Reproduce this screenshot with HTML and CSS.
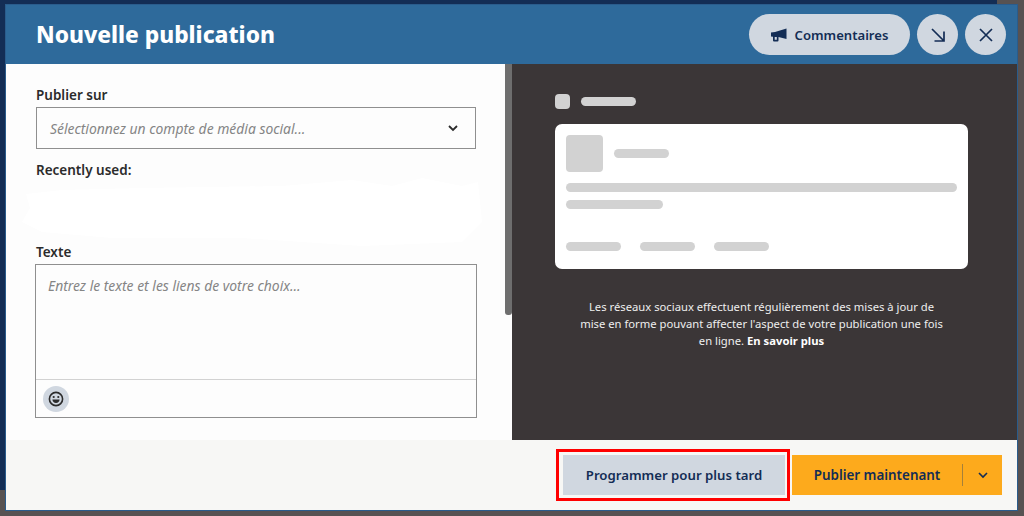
FILE: index.html
```html
<!DOCTYPE html>
<html lang="fr">
<head>
  <meta charset="utf-8">
  <title>Nouvelle publication</title>
  <link rel="stylesheet" href="styles.css">
</head>
<body>
  <div class="modal">
    <header class="modal-head">
      <h1>Nouvelle publication</h1>
      <div class="head-actions">
        <button class="pill">
          <svg class="pill-icon" viewBox="0 0 16 14" width="16" height="14"><path d="M0 4.5 L4 4 L15.5 0.5 V11 L7.5 9 V12.5 Q7.5 13.5 6.5 13.5 H3 Q2 13.5 2 12.5 V8.7 L0 8.4 Z M3.7 9 V11.8 H5.8 V9 Z" fill="#132d55" fill-rule="evenodd"/></svg>
          Commentaires
        </button>
        <button class="round">
          <svg viewBox="0 0 16 16" width="16" height="16"><path d="M2 2 L13.5 13.5 M14 4.5 V14 H4.5" fill="none" stroke="#132d55" stroke-width="1.7"/></svg>
        </button>
        <button class="round">
          <svg viewBox="0 0 16 16" width="16" height="16"><path d="M2 2 L14 14 M14 2 L2 14" fill="none" stroke="#132d55" stroke-width="1.7"/></svg>
        </button>
      </div>
    </header>

    <div class="modal-body">
      <section class="form-pane">
        <label class="field-label">Publier sur</label>
        <div class="select">
          <span>Sélectionnez un compte de média social...</span>
          <svg viewBox="0 0 10 7" width="10" height="7"><path d="M1 1 L5 5 L9 1" fill="none" stroke="#2b2b2b" stroke-width="1.8"/></svg>
        </div>
        <label class="field-label recent-label">Recently used:</label>
        <div class="recent-list">
          <!-- account names painted out in the screenshot -->
          <svg class="recent-blot" viewBox="0 0 460 74" width="460" height="74"><path d="M4 22 L40 18 L120 16 L260 14 L330 8 L370 14 L400 6 L440 14 L456 10 L460 50 L440 70 L340 74 L220 66 L90 66 L20 60 L0 50 L8 36 Z" fill="#fff"/></svg>
        </div>
        <label class="field-label">Texte</label>
        <div class="editor">
          <div class="editor-text">Entrez le texte et les liens de votre choix...</div>
          <div class="editor-tools">
            <span class="emoji">
              <svg viewBox="0 0 16 16" width="16" height="16">
                <circle cx="8" cy="8" r="6.6" fill="none" stroke="#2b2b2b" stroke-width="1.6"/>
                <circle cx="5.7" cy="6" r="1.1" fill="#2b2b2b"/>
                <circle cx="10.3" cy="6" r="1.1" fill="#2b2b2b"/>
                <path d="M4.4 8.6 H11.6 Q11.2 12 8 12 Q4.8 12 4.4 8.6 Z" fill="#2b2b2b"/>
              </svg>
            </span>
          </div>
        </div>
        <div class="scroll-thumb"></div>
      </section>

      <section class="preview-pane">
        <div class="preview-account">
          <span class="ph-square"></span>
          <span class="ph-line w55"></span>
        </div>
        <div class="preview-card">
          <div class="card-top">
            <span class="ph-avatar"></span>
            <span class="ph-line w55"></span>
          </div>
          <div class="ph-line full"></div>
          <div class="ph-line w97"></div>
          <div class="card-actions">
            <span class="ph-line w55"></span>
            <span class="ph-line w55"></span>
            <span class="ph-line w55"></span>
          </div>
        </div>
        <p class="preview-note">Les réseaux sociaux effectuent régulièrement des mises à jour de<br>mise en forme pouvant affecter l'aspect de votre publication une fois<br>en ligne. <b>En savoir plus</b></p>
      </section>
    </div>

    <footer class="modal-foot">
      <div class="highlight">
        <button class="btn-later">Programmer pour plus tard</button>
      </div>
      <button class="btn-publish">
        <span class="publish-text">Publier maintenant</span>
        <span class="publish-caret">
          <svg viewBox="0 0 10 7" width="10" height="7"><path d="M1 1 L5 5 L9 1" fill="none" stroke="#132d55" stroke-width="1.6"/></svg>
        </span>
      </button>
    </footer>
  </div>
</body>
</html>
```

FILE: styles.css
```css
html, body {margin: 0; height: 100%;}
body {height: 516px; overflow: hidden; font-family: "Noto Sans", "Liberation Sans", sans-serif; color: #2b2b2b; background-color: #575252;
  background-image: linear-gradient(#132d55, #132d55), linear-gradient(#132d55, #132d55);
  background-size: 997px 5px, 6px 490px; background-position: 0 0, 0 0; background-repeat: no-repeat;}
button {font-family: inherit; border: none; cursor: pointer;}

.modal {width: 1011px; height: 505px; margin: 5px 0 0 6px; display: flex; flex-direction: column; box-shadow: 0 0 0 1px #2a5c8c;}

.modal-head {height: 59px; flex: none; display: flex; align-items: center; justify-content: space-between; padding: 0 11px 0 30px; background: #2e6a9b; box-sizing: border-box;}
.modal-head h1 {margin: 0; font-size: 22.7px; font-weight: 800; color: #fff;}
.head-actions {display: flex; gap: 7px;}
.pill {width: 161px; height: 41px; border-radius: 21px; background: #d0d7e0; color: #132d55; font-size: 13.1px; font-weight: 600; display: flex; align-items: center; justify-content: center; gap: 8px; padding: 0;}
.round {width: 41px; height: 41px; border-radius: 50%; background: #d0d7e0; display: flex; align-items: center; justify-content: center; padding: 0;}

.modal-body {flex: 1; display: flex; min-height: 0;}

.form-pane {width: 506px; position: relative; background: #fdfdfd; padding: 22px 36px 0 30px; box-sizing: border-box;}
.field-label {display: block; font-size: 13.5px; font-weight: 600; line-height: 18px;}
.select {height: 42px; margin-top: 3px; border: 1px solid #8f8f8f; box-sizing: border-box; display: flex; align-items: center; justify-content: space-between; padding: 0 17px 0 13px; background: #fdfdfd;}
.select span, .editor-text {font-size: 13.9px; font-style: italic; color: #858585;}
.recent-label {margin-top: 12px;}
.recent-list {height: 64px;}
.recent-blot {position: absolute; left: 16px; top: 108px;}
.editor {height: 154px; margin: 3px 0 0 -1px; border: 1px solid #8f8f8f; display: flex; flex-direction: column; box-sizing: border-box; width: 442px;}
.editor-text {flex: 1; padding: 11px 12px;}
.editor-tools {height: 37px; border-top: 1px solid #d2d2d2; display: flex; align-items: center; padding-left: 7px;}
.emoji {width: 26px; height: 26px; border-radius: 50%; background: #d0d7e0; display: flex; align-items: center; justify-content: center;}
.scroll-thumb {position: absolute; top: 0; right: 0; width: 7px; height: 251px; background: #6e6e6e; border-radius: 0 0 3px 3px;}

.preview-pane {flex: 1; background: #3b3637; padding: 30px 49px 0 43px;}
.preview-account {display: flex; align-items: center; gap: 11px; height: 15px;}
.ph-square {width: 15px; height: 15px; border-radius: 4px; background: #d2d2d2;}
.ph-line {display: block; height: 9px; border-radius: 5px; background: #d2d2d2;}
.w55 {width: 55px;}
.w97 {width: 97px; margin-top: 8px;}
.full {width: 100%;}
.preview-card {margin-top: 15px; height: 145px; background: #fff; border-radius: 7px; padding: 11px; box-sizing: border-box;}
.card-top {display: flex; align-items: center; gap: 11px; margin-bottom: 11px;}
.ph-avatar {width: 37px; height: 37px; border-radius: 4px; background: #d2d2d2;}
.card-actions {display: flex; gap: 19px; margin-top: 33px;}
.preview-note {margin: 29px 0 0; text-align: center; font-size: 11.25px; line-height: 17px; color: #eee;}
.preview-note b {color: #fff;}

.modal-foot {height: 70px; flex: none; display: flex; align-items: center; justify-content: flex-end; gap: 2px; padding-right: 15px; background: #f7f7f5; box-sizing: border-box;}
.highlight {border: 3px solid #f00; padding: 3px 2px 3px 4px;}
.btn-later {display: block; width: 222px; height: 40px; background: #d0d7e0; color: #132d55; font-size: 13.2px; font-weight: 600; padding: 0;}
.btn-publish {width: 210px; height: 40px; background: #fdaa1c; color: #132d55; font-size: 13.4px; font-weight: 600; display: flex; align-items: center; padding: 0;}
.publish-text {flex: 1; text-align: center;}
.publish-caret {width: 40px; height: 22px; border-left: 1px solid #a5803a; box-sizing: border-box; display: flex; align-items: center; justify-content: center;}
```
